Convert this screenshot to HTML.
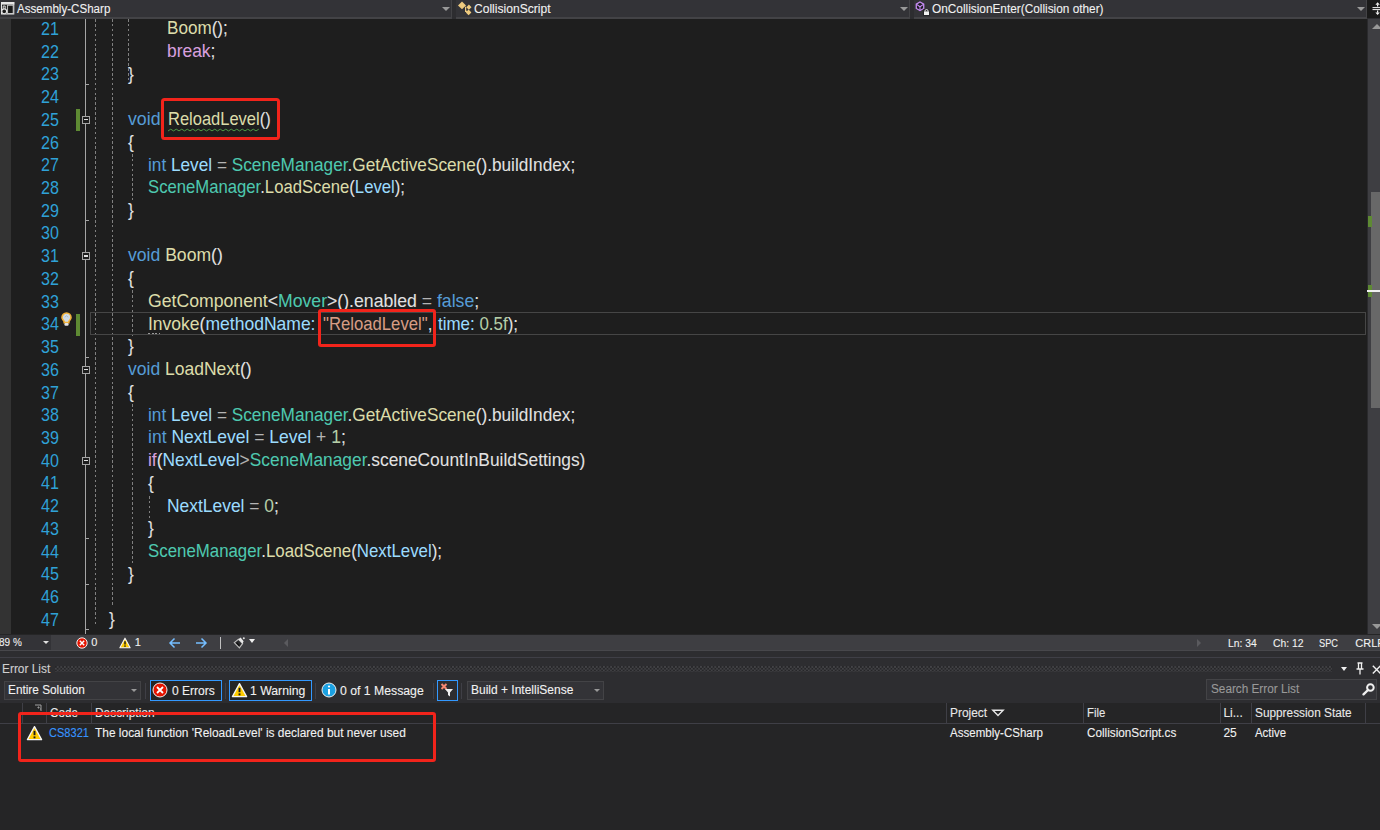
<!DOCTYPE html><html><head><meta charset="utf-8"><style>
*{margin:0;padding:0;box-sizing:border-box}
html,body{width:1380px;height:830px;overflow:hidden;background:#252526;font-family:"Liberation Sans",sans-serif}
.a{position:absolute}
.code{position:absolute;white-space:pre;font-size:18.5px;line-height:22px;transform-origin:0 0;-webkit-text-stroke-width:0.05px}
.ln{position:absolute;width:40px;text-align:right;font-size:18.5px;color:#2FA2D8;white-space:pre;transform-origin:100% 0;transform:scaleX(0.87)}
.ui{position:absolute;white-space:pre;font-size:12.5px;color:#F1F1F1;transform-origin:0 0;-webkit-text-stroke-width:0.1px}
</style></head><body>

<div class="a" style="left:0;top:0;width:1380px;height:634px;background:#1E1E1E"></div>
<div class="a" style="left:0;top:19px;width:11px;height:615px;background:#333333"></div>
<div class="ln" style="left:19px;top:17.89px;line-height:22px">21</div>
<div class="ln" style="left:19px;top:40.62px;line-height:22px">22</div>
<div class="ln" style="left:19px;top:63.35px;line-height:22px">23</div>
<div class="ln" style="left:19px;top:86.08px;line-height:22px">24</div>
<div class="ln" style="left:19px;top:108.81px;line-height:22px">25</div>
<div class="ln" style="left:19px;top:131.54px;line-height:22px">26</div>
<div class="ln" style="left:19px;top:154.27px;line-height:22px">27</div>
<div class="ln" style="left:19px;top:177.00px;line-height:22px">28</div>
<div class="ln" style="left:19px;top:199.73px;line-height:22px">29</div>
<div class="ln" style="left:19px;top:222.46px;line-height:22px">30</div>
<div class="ln" style="left:19px;top:245.19px;line-height:22px">31</div>
<div class="ln" style="left:19px;top:267.92px;line-height:22px">32</div>
<div class="ln" style="left:19px;top:290.65px;line-height:22px">33</div>
<div class="ln" style="left:19px;top:313.38px;line-height:22px">34</div>
<div class="ln" style="left:19px;top:336.11px;line-height:22px">35</div>
<div class="ln" style="left:19px;top:358.84px;line-height:22px">36</div>
<div class="ln" style="left:19px;top:381.57px;line-height:22px">37</div>
<div class="ln" style="left:19px;top:404.30px;line-height:22px">38</div>
<div class="ln" style="left:19px;top:427.03px;line-height:22px">39</div>
<div class="ln" style="left:19px;top:449.76px;line-height:22px">40</div>
<div class="ln" style="left:19px;top:472.49px;line-height:22px">41</div>
<div class="ln" style="left:19px;top:495.22px;line-height:22px">42</div>
<div class="ln" style="left:19px;top:517.95px;line-height:22px">43</div>
<div class="ln" style="left:19px;top:540.68px;line-height:22px">44</div>
<div class="ln" style="left:19px;top:563.41px;line-height:22px">45</div>
<div class="ln" style="left:19px;top:586.14px;line-height:22px">46</div>
<div class="ln" style="left:19px;top:608.87px;line-height:22px">47</div>
<div class="code" id="L21" style="left:167.0px;top:17.19px; transform:scaleX(0.9242);"><span style="color:#DCDCAA">Boom</span><span style="color:#E2E2E2">();</span></div>
<div class="code" id="L22" style="left:167.0px;top:39.92px; transform:scaleX(0.9412);"><span style="color:#D8A0DF">break</span><span style="color:#E2E2E2">;</span></div>
<div class="code" id="L23" style="left:128.0px;top:62.65px; transform:scaleX(0.9350);"><span style="color:#E2E2E2">}</span></div>
<div class="code" id="L25" style="left:128.0px;top:108.11px; transform:scaleX(0.9588);"><span style="color:#569CD6">void</span></div>
<div class="code" id="L125" style="left:167.5px;top:108.11px; transform:scaleX(0.8913);"><span style="color:#DCDCAA">ReloadLevel</span><span style="color:#E2E2E2">()</span></div>
<div class="code" id="L26" style="left:128.0px;top:130.84px; transform:scaleX(0.9350);"><span style="color:#E2E2E2">{</span></div>
<div class="code" id="L27" style="left:148.0px;top:153.57px; transform:scaleX(0.9303);"><span style="color:#569CD6">int</span><span style="color:#E2E2E2"> </span><span style="color:#9CDCFE">Level</span><span style="color:#E2E2E2"> </span><span style="color:#B4B4B4">=</span><span style="color:#E2E2E2"> </span><span style="color:#4EC9B0">SceneManager</span><span style="color:#E2E2E2">.</span><span style="color:#DCDCAA">GetActiveScene</span><span style="color:#E2E2E2">().buildIndex;</span></div>
<div class="code" id="L28" style="left:148.0px;top:176.30px; transform:scaleX(0.9018);"><span style="color:#4EC9B0">SceneManager</span><span style="color:#E2E2E2">.</span><span style="color:#DCDCAA">LoadScene</span><span style="color:#E2E2E2">(</span><span style="color:#9CDCFE">Level</span><span style="color:#E2E2E2">);</span></div>
<div class="code" id="L29" style="left:128.0px;top:199.03px; transform:scaleX(0.9350);"><span style="color:#E2E2E2">}</span></div>
<div class="code" id="L31" style="left:128.0px;top:244.49px; transform:scaleX(0.9500);"><span style="color:#569CD6">void</span><span style="color:#E2E2E2"> </span><span style="color:#DCDCAA">Boom</span><span style="color:#E2E2E2">()</span></div>
<div class="code" id="L32" style="left:128.0px;top:267.22px; transform:scaleX(0.9350);"><span style="color:#E2E2E2">{</span></div>
<div class="code" id="L33" style="left:148.0px;top:289.95px; transform:scaleX(0.9539);"><span style="color:#DCDCAA">GetComponent</span><span style="color:#E2E2E2">&lt;</span><span style="color:#4EC9B0">Mover</span><span style="color:#E2E2E2">&gt;().enabled </span><span style="color:#B4B4B4">=</span><span style="color:#E2E2E2"> </span><span style="color:#569CD6">false</span><span style="color:#E2E2E2">;</span></div>
<div class="code" id="L34" style="left:148.0px;top:312.68px; transform:scaleX(0.9469);"><span style="color:#DCDCAA">Invoke</span><span style="color:#E2E2E2">(</span><span style="color:#9CDCFE">methodName:</span></div>
<div class="code" id="L134" style="left:322.8px;top:312.68px; transform:scaleX(0.9025);"><span style="color:#D69D85">"ReloadLevel"</span><span style="color:#E2E2E2">,</span></div>
<div class="code" id="L234" style="left:438.4px;top:312.68px; transform:scaleX(0.9162);"><span style="color:#9CDCFE">time:</span><span style="color:#E2E2E2"> </span><span style="color:#B5CEA8">0.5f</span><span style="color:#E2E2E2">);</span></div>
<div class="code" id="L35" style="left:128.0px;top:335.41px; transform:scaleX(0.9350);"><span style="color:#E2E2E2">}</span></div>
<div class="code" id="L36" style="left:128.0px;top:358.14px; transform:scaleX(0.9466);"><span style="color:#569CD6">void</span><span style="color:#E2E2E2"> </span><span style="color:#DCDCAA">LoadNext</span><span style="color:#E2E2E2">()</span></div>
<div class="code" id="L37" style="left:128.0px;top:380.87px; transform:scaleX(0.9350);"><span style="color:#E2E2E2">{</span></div>
<div class="code" id="L38" style="left:148.0px;top:403.60px; transform:scaleX(0.9303);"><span style="color:#569CD6">int</span><span style="color:#E2E2E2"> </span><span style="color:#9CDCFE">Level</span><span style="color:#E2E2E2"> </span><span style="color:#B4B4B4">=</span><span style="color:#E2E2E2"> </span><span style="color:#4EC9B0">SceneManager</span><span style="color:#E2E2E2">.</span><span style="color:#DCDCAA">GetActiveScene</span><span style="color:#E2E2E2">().buildIndex;</span></div>
<div class="code" id="L39" style="left:148.0px;top:426.33px; transform:scaleX(0.9474);"><span style="color:#569CD6">int</span><span style="color:#E2E2E2"> </span><span style="color:#9CDCFE">NextLevel</span><span style="color:#E2E2E2"> </span><span style="color:#B4B4B4">=</span><span style="color:#E2E2E2"> </span><span style="color:#9CDCFE">Level</span><span style="color:#E2E2E2"> </span><span style="color:#B4B4B4">+</span><span style="color:#E2E2E2"> </span><span style="color:#B5CEA8">1</span><span style="color:#E2E2E2">;</span></div>
<div class="code" id="L40" style="left:148.0px;top:449.06px; transform:scaleX(0.9378);"><span style="color:#D8A0DF">if</span><span style="color:#E2E2E2">(</span><span style="color:#9CDCFE">NextLevel</span><span style="color:#B4B4B4">&gt;</span><span style="color:#4EC9B0">SceneManager</span><span style="color:#E2E2E2">.sceneCountInBuildSettings)</span></div>
<div class="code" id="L41" style="left:148.0px;top:471.79px; transform:scaleX(0.9350);"><span style="color:#E2E2E2">{</span></div>
<div class="code" id="L42" style="left:167.0px;top:494.52px; transform:scaleX(0.9412);"><span style="color:#9CDCFE">NextLevel</span><span style="color:#E2E2E2"> </span><span style="color:#B4B4B4">=</span><span style="color:#E2E2E2"> </span><span style="color:#B5CEA8">0</span><span style="color:#E2E2E2">;</span></div>
<div class="code" id="L43" style="left:148.0px;top:517.25px; transform:scaleX(0.9350);"><span style="color:#E2E2E2">}</span></div>
<div class="code" id="L44" style="left:148.0px;top:539.98px; transform:scaleX(0.9102);"><span style="color:#4EC9B0">SceneManager</span><span style="color:#E2E2E2">.</span><span style="color:#DCDCAA">LoadScene</span><span style="color:#E2E2E2">(</span><span style="color:#9CDCFE">NextLevel</span><span style="color:#E2E2E2">);</span></div>
<div class="code" id="L45" style="left:128.0px;top:562.71px; transform:scaleX(0.9350);"><span style="color:#E2E2E2">}</span></div>
<div class="code" id="L47" style="left:109.0px;top:608.17px; transform:scaleX(0.9350);"><span style="color:#E2E2E2">}</span></div>
<div class="a" style="left:0;top:0;width:1380px;height:19px;background:#2D2D30"></div>
<div class="a" style="left:0px;top:0;width:452px;height:19px;background:#333337;border-right:1.5px solid #434346;border-bottom:2px solid #434346"></div>
<div class="a" style="left:442.0px;top:7.0px;width:0;height:0;border-left:4.0px solid transparent;border-right:4.0px solid transparent;border-top:4.0px solid #999999"></div>
<div class="a" style="left:456px;top:0;width:454px;height:19px;background:#333337;border-right:1.5px solid #434346;border-bottom:2px solid #434346"></div>
<div class="a" style="left:900.0px;top:7.0px;width:0;height:0;border-left:4.0px solid transparent;border-right:4.0px solid transparent;border-top:4.0px solid #999999"></div>
<div class="a" style="left:914px;top:0;width:453px;height:19px;background:#333337;border-right:1.5px solid #434346;border-bottom:2px solid #434346"></div>
<div class="a" style="left:1357.0px;top:7.0px;width:0;height:0;border-left:4.0px solid transparent;border-right:4.0px solid transparent;border-top:4.0px solid #999999"></div>
<svg class="a" style="left:0px;top:0px" width="16" height="17" viewBox="0 0 16 17"><rect x="1.5" y="2.5" width="12.3" height="11.5" fill="#2A2A2A" stroke="#E6E6E6" stroke-width="1"/><rect x="1" y="2" width="13.3" height="2.6" fill="#E6E6E6"/><rect x="7.6" y="5.2" width="5.6" height="8.3" fill="#1A1A1A" stroke="#D8D8D8" stroke-width="0.9"/><circle cx="4.2" cy="11.3" r="2.4" fill="#1A1A1A" stroke="#E6E6E6" stroke-width="1.1"/><path d="M3.2 8.8 V6 H5.2 V8.8" stroke="#E6E6E6" stroke-width="0.9" fill="none"/></svg>
<div class="ui" id="navA" style="left:17.0px;top:0.67px;font-size:12.50px;line-height:16px;color:#F1F1F1;transform:scaleX(0.9267);">Assembly-CSharp</div>
<svg class="a" style="left:450px;top:0px" width="25" height="17" viewBox="0 0 25 17"><path d="M8 5.4 L12 1.6 L16 5.4 L12 9.2 Z" fill="#EFCB7E"/><path d="M16.3 7.2 L18.9 4.6 L21.5 7.2 L18.9 9.8 Z" fill="#EFCB7E"/><path d="M15.8 12.4 L18.6 9.6 L21.4 12.4 L18.6 15.2 Z" fill="#EFCB7E"/><path d="M15.6 6.8 V11.3 H17.2" stroke="#EFCB7E" stroke-width="1.2" fill="none"/></svg>
<div class="ui" id="navB" style="left:474.0px;top:0.67px;font-size:12.50px;line-height:16px;color:#F1F1F1;transform:scaleX(0.9658);">CollisionScript</div>
<svg class="a" style="left:905px;top:0px" width="27" height="17" viewBox="0 0 27 17"><path d="M15.00 2.00 L18.72 4.15 L18.72 8.45 L15.00 10.60 L11.28 8.45 L11.28 4.15 Z" fill="#1E1E22" stroke="#C48AF2" stroke-width="1.3"/><path d="M11.28 4.15 L15 6.8 L18.72 4.15 M15 6.8 V10.60" stroke="#C48AF2" stroke-width="1.1" fill="none"/><rect x="18.2" y="9.3" width="6.6" height="6.4" fill="#222225"/><rect x="19" y="11.4" width="5" height="3.6" fill="#F2F2F2"/><path d="M20 11.4 V10.8 A1.5 1.2 0 0 1 23 10.8 V11.4" stroke="#F2F2F2" stroke-width="1" fill="none"/></svg>
<div class="ui" id="navC" style="left:932.0px;top:0.67px;font-size:12.50px;line-height:16px;color:#F1F1F1;transform:scaleX(0.9459);">OnCollisionEnter(Collision other)</div>
<div class="a" style="left:1367px;top:0;width:13px;height:18px;background:#1A1A1A"></div>
<svg class="a" style="left:1367px;top:0px" width="13" height="18" viewBox="0 0 13 18"><path d="M10.6 2.2 L8.4 4.8 H12.8 Z M10.6 15 L8.4 12.4 H12.8 Z" fill="#F4F4F4"/><path d="M10.6 4.5 V6.5 M10.6 10.6 V12.8" stroke="#F4F4F4" stroke-width="1.2"/><path d="M5.5 7.6 H13 M5.5 9.6 H13" stroke="#F4F4F4" stroke-width="1"/></svg>
<div class="a" style="left:85px;top:19px;width:1.3px;height:615px;background:#A5A5A5"></div>
<div class="a" style="left:82px;top:116.0px;width:7.5px;height:7.5px;background:#1E1E1E;border:1.2px solid #A5A5A5"></div>
<div class="a" style="left:83.5px;top:118.9px;width:4.5px;height:1.6px;background:#E0E0E0"></div>
<div class="a" style="left:82px;top:252.4px;width:7.5px;height:7.5px;background:#1E1E1E;border:1.2px solid #A5A5A5"></div>
<div class="a" style="left:83.5px;top:255.3px;width:4.5px;height:1.6px;background:#E0E0E0"></div>
<div class="a" style="left:82px;top:366.1px;width:7.5px;height:7.5px;background:#1E1E1E;border:1.2px solid #A5A5A5"></div>
<div class="a" style="left:83.5px;top:368.9px;width:4.5px;height:1.6px;background:#E0E0E0"></div>
<div class="a" style="left:82px;top:457.0px;width:7.5px;height:7.5px;background:#1E1E1E;border:1.2px solid #A5A5A5"></div>
<div class="a" style="left:83.5px;top:459.9px;width:4.5px;height:1.6px;background:#E0E0E0"></div>
<div class="a" style="left:85px;top:83.8px;width:4px;height:1px;background:#A5A5A5"></div>
<div class="a" style="left:85px;top:220.2px;width:4px;height:1px;background:#A5A5A5"></div>
<div class="a" style="left:85px;top:356.6px;width:4px;height:1px;background:#A5A5A5"></div>
<div class="a" style="left:85px;top:538.4px;width:4px;height:1px;background:#A5A5A5"></div>
<div class="a" style="left:85px;top:583.9px;width:4px;height:1px;background:#A5A5A5"></div>
<div class="a" style="left:85px;top:629.3px;width:4px;height:1px;background:#A5A5A5"></div>
<div class="a" style="left:95.0px;top:19.0px;width:1px;height:608.0px;background:repeating-linear-gradient(to bottom,#808080 0,#808080 2.6px,transparent 2.6px,transparent 4.9px)"></div>
<div class="a" style="left:112.0px;top:19.0px;width:1px;height:588.0px;background:repeating-linear-gradient(to bottom,#808080 0,#808080 2.6px,transparent 2.6px,transparent 4.9px)"></div>
<div class="a" style="left:127.5px;top:19.0px;width:1px;height:63.0px;background:repeating-linear-gradient(to bottom,#808080 0,#808080 2.6px,transparent 2.6px,transparent 4.9px)"></div>
<div class="a" style="left:132.0px;top:154.0px;width:1px;height:45.5px;background:repeating-linear-gradient(to bottom,#808080 0,#808080 2.6px,transparent 2.6px,transparent 4.9px)"></div>
<div class="a" style="left:132.0px;top:290.4px;width:1px;height:45.5px;background:repeating-linear-gradient(to bottom,#808080 0,#808080 2.6px,transparent 2.6px,transparent 4.9px)"></div>
<div class="a" style="left:132.0px;top:404.0px;width:1px;height:159.1px;background:repeating-linear-gradient(to bottom,#808080 0,#808080 2.6px,transparent 2.6px,transparent 4.9px)"></div>
<div class="a" style="left:149.0px;top:495.9px;width:1px;height:21.7px;background:repeating-linear-gradient(to bottom,#808080 0,#808080 2.6px,transparent 2.6px,transparent 4.9px)"></div>
<div class="a" style="left:75.5px;top:109.0px;width:4px;height:22.2px;background:#5E8A33"></div>
<div class="a" style="left:75.5px;top:313.6px;width:4px;height:22.2px;background:#5E8A33"></div>
<div class="a" style="left:89.5px;top:312px;width:1276px;height:23px;border:1.7px solid #464646"></div>
<svg class="a" style="left:61px;top:312px" width="11" height="15" viewBox="0 0 11 15"><path d="M5.5 1 A4.5 4.5 0 0 1 10 5.5 C10 7.3 8.6 8.2 7.8 9.6 V10.6 H3.2 V9.6 C2.4 8.2 1 7.3 1 5.5 A4.5 4.5 0 0 1 5.5 1 Z" fill="#CFDCE6" stroke="#F2B23A" stroke-width="1.6"/><path d="M3.8 5.2 L5.5 3.8 L7.2 5.2" stroke="#9FB4C4" stroke-width="0.8" fill="none"/><rect x="3.4" y="11" width="4.2" height="2.8" rx="1.2" fill="#E6E6E6"/></svg>
<div class="a" style="left:148px;top:333px;width:12px;height:1.3px;background:repeating-linear-gradient(to right,#9A9A9A 0,#9A9A9A 2px,transparent 2px,transparent 3.5px)"></div>
<svg class="a" style="left:167.5px;top:127.6px" width="93" height="4" viewBox="0 0 93 4"><path d="M0 3  L2.75 1.2 L5.50 2.9 L8.25 1.2 L11.00 2.9 L13.75 1.2 L16.50 2.9 L19.25 1.2 L22.00 2.9 L24.75 1.2 L27.50 2.9 L30.25 1.2 L33.00 2.9 L35.75 1.2 L38.50 2.9 L41.25 1.2 L44.00 2.9 L46.75 1.2 L49.50 2.9 L52.25 1.2 L55.00 2.9 L57.75 1.2 L60.50 2.9 L63.25 1.2 L66.00 2.9 L68.75 1.2 L71.50 2.9 L74.25 1.2 L77.00 2.9 L79.75 1.2 L82.50 2.9 L85.25 1.2 L88.00 2.9 L90.75 1.2" stroke="#4F9A47" stroke-width="1" fill="none" stroke-linejoin="round"/></svg>
<div class="a" style="left:161px;top:98px;width:119px;height:42px;border:3.2px solid #F2241B;border-radius:3.5px"></div>
<div class="a" style="left:318px;top:309px;width:118px;height:38px;border:3px solid #F2241B;border-radius:3px"></div>
<div class="a" style="left:1366.5px;top:19px;width:13.5px;height:615px;background:#3E3E42;border-left:1px solid #2A2A2D"></div>
<div class="a" style="left:1371px;top:192px;width:9px;height:216px;background:#686868"></div>
<div class="a" style="left:1372px;top:24px;width:0;height:0;border-left:5px solid transparent;border-right:5px solid transparent;border-bottom:5px solid #999"></div>
<div class="a" style="left:1372px;top:624px;width:0;height:0;border-left:5px solid transparent;border-right:5px solid transparent;border-top:5px solid #999"></div>
<div class="a" style="left:1368px;top:216px;width:4px;height:11px;background:#5E8A33"></div>
<div class="a" style="left:1368px;top:285px;width:4px;height:12px;background:#5E8A33"></div>
<div class="a" style="left:1367px;top:290px;width:13px;height:1.5px;background:#F0F0F0"></div>
<div class="a" style="left:0;top:634.5px;width:1380px;height:16px;background:#3E3E42"></div>
<div class="a" style="left:0;top:634.5px;width:51px;height:16px;background:#333337"></div>
<div class="ui" id="zoom" style="left:0.0px;top:635.49px;font-size:11.00px;line-height:14px;color:#F1F1F1;transform:scaleX(0.9080);margin-left:-1px;">89 %</div>
<div class="a" style="left:43.0px;top:640.8px;width:0;height:0;border-left:3.5px solid transparent;border-right:3.5px solid transparent;border-top:3.5px solid #E0E0E0"></div>
<svg class="a" style="left:75.5px;top:637px" width="12" height="12" viewBox="0 0 12 12"><circle cx="6" cy="6" r="5.2" fill="#E51400" stroke="#F0F0F0" stroke-width="1"/><path d="M3.8 3.8 L8.2 8.2 M8.2 3.8 L3.8 8.2" stroke="#fff" stroke-width="1.4"/></svg>
<div class="ui" id="st0" style="left:91.3px;top:635.49px;font-size:11.00px;line-height:14px;color:#F1F1F1;">0</div>
<svg class="a" style="left:119px;top:637px" width="12" height="12" viewBox="0 0 12 12"><path d="M6 1.2 L11.1 10.7 H0.9 Z" fill="#FFCC00" stroke="#F4F4F4" stroke-width="1.1" stroke-linejoin="round"/><path d="M6 4.2 V7.4" stroke="#1A1A1A" stroke-width="1.5"/><rect x="5.25" y="8.4" width="1.5" height="1.4" fill="#1A1A1A"/></svg>
<div class="ui" id="st1" style="left:134.8px;top:635.49px;font-size:11.00px;line-height:14px;color:#F1F1F1;">1</div>
<svg class="a" style="left:168px;top:637px" width="13" height="12" viewBox="0 0 13 12"><path d="M12 6 H2 M6.5 1.5 L2 6 L6.5 10.5" stroke="#75BEFF" stroke-width="1.5" fill="none"/></svg>
<svg class="a" style="left:195px;top:637px" width="13" height="12" viewBox="0 0 13 12"><path d="M1 6 H11 M6.5 1.5 L11 6 L6.5 10.5" stroke="#75BEFF" stroke-width="1.5" fill="none"/></svg>
<div class="a" style="left:220px;top:637px;width:1.3px;height:12px;background:#C0C0C0"></div>
<svg class="a" style="left:225px;top:634px" width="22" height="18" viewBox="0 0 22 18"><path d="M9.3 8.6 L13.4 5.2 L17.6 9.6 L14.4 13.9 Z" fill="#2A2A2D" stroke="#BDBDBD" stroke-width="1.2"/><path d="M13.4 5.2 L15.6 3.6 L18.6 7.2 L17.6 9.6 Z" fill="#E8E8E8"/><path d="M11.6 8.8 L14.3 11.6" stroke="#111" stroke-width="1.3"/><circle cx="18.8" cy="4.3" r="1" fill="#E0E0E0"/></svg>
<div class="a" style="left:248.5px;top:639.4px;width:0;height:0;border-left:3.5px solid transparent;border-right:3.5px solid transparent;border-top:4.4px solid #F0F0F0"></div>
<div class="a" style="left:284px;top:639px;width:0;height:0;border-top:4.5px solid transparent;border-bottom:4.5px solid transparent;border-right:4.5px solid #5A5A5E"></div>
<div class="a" style="left:1197px;top:639px;width:0;height:0;border-top:4.5px solid transparent;border-bottom:4.5px solid transparent;border-left:4.5px solid #5A5A5E"></div>
<div class="ui" id="ln" style="left:1228.0px;top:636.19px;font-size:11.00px;line-height:14px;color:#F1F1F1;transform:scaleX(0.9355);">Ln: 34</div>
<div class="ui" id="ch" style="left:1272.5px;top:636.19px;font-size:11.00px;line-height:14px;color:#F1F1F1;transform:scaleX(0.9438);">Ch: 12</div>
<div class="ui" id="spc" style="left:1318.7px;top:636.19px;font-size:11.00px;line-height:14px;color:#F1F1F1;transform:scaleX(0.8400);">SPC</div>
<div class="ui" id="crlf" style="left:1355.3px;top:636.19px;font-size:11.00px;line-height:14px;color:#F1F1F1;">CRLF</div>
<div class="a" style="left:0;top:650.5px;width:1380px;height:7px;background:#2D2D30"></div>
<div class="a" style="left:0;top:650.3px;width:1380px;height:1.2px;background:#47474B"></div>
<div class="a" style="left:0;top:657px;width:1380px;height:1px;background:#3F3F46"></div>
<div class="a" style="left:0;top:658px;width:1380px;height:45px;background:#2D2D30"></div>
<div class="ui" id="elt" style="left:1.5px;top:661.84px;font-size:12.00px;line-height:15px;color:#D0D0D0;transform:scaleX(0.9898);">Error List</div>
<div class="a" style="left:55px;top:666px;width:1277px;height:6px;background-color:#252527;background-image:linear-gradient(45deg,#4A4A4E 25%,transparent 25%,transparent 75%,#4A4A4E 75%),linear-gradient(45deg,#4A4A4E 25%,transparent 25%,transparent 75%,#4A4A4E 75%);background-size:3.6px 3.6px;background-position:0 0,1.8px 1.8px;opacity:0.85"></div>
<div class="a" style="left:1340.7px;top:666.5px;width:0;height:0;border-left:3.8px solid transparent;border-right:3.8px solid transparent;border-top:4.6px solid #F0F0F0"></div>
<svg class="a" style="left:1355px;top:662px" width="10" height="13" viewBox="0 0 10 13"><path d="M2.5 1 H7.5 M3.5 1 V7 M6.5 1 V7 M1.5 7 H8.5 M5 7 V12.5" stroke="#F0F0F0" stroke-width="1.3" fill="none"/></svg>
<svg class="a" style="left:1371.5px;top:664.5px" width="9" height="9" viewBox="0 0 9 9"><path d="M0.8 0.8 L8.5 8.5 M8.5 0.8 L0.8 8.5" stroke="#F0F0F0" stroke-width="1.4"/></svg>
<div class="a" style="left:4px;top:681px;width:137px;height:19px;background:#333337;border:1px solid #434346"></div>
<div class="ui" id="es" style="left:7.5px;top:682.54px;font-size:12.00px;line-height:15px;color:#F1F1F1;transform:scaleX(0.9846);">Entire Solution</div>
<div class="a" style="left:130.5px;top:689.2px;width:0;height:0;border-left:3.5px solid transparent;border-right:3.5px solid transparent;border-top:3.5px solid #999"></div>
<div class="a" style="left:145px;top:683px;width:1px;height:16px;background:#3F3F46"></div>
<div class="a" style="left:150px;top:680px;width:72px;height:21px;border:1.5px solid #3399FF;background:#252526"></div>
<svg class="a" style="left:152px;top:682px" width="16" height="16" viewBox="0 0 16 16"><circle cx="8" cy="8" r="7" fill="#E51400" stroke="#F0F0F0" stroke-width="1"/><path d="M5 5 L11 11 M11 5 L5 11" stroke="#fff" stroke-width="1.8"/></svg>
<div class="ui" id="err" style="left:171.7px;top:683.64px;font-size:12.00px;line-height:15px;color:#F1F1F1;transform:scaleX(1.0023);">0 Errors</div>
<div class="a" style="left:225px;top:683px;width:1px;height:16px;background:#3F3F46"></div>
<div class="a" style="left:229px;top:680px;width:83px;height:21px;border:1.5px solid #3399FF;background:#252526"></div>
<svg class="a" style="left:231px;top:682px" width="17" height="16" viewBox="0 0 17 16"><path d="M8.5 1.6 L15.6 14.6 H1.4 Z" fill="#FFCC00" stroke="#F4F4F4" stroke-width="1.3" stroke-linejoin="round"/><path d="M8.5 5.8 V10.2" stroke="#1A1A1A" stroke-width="1.9"/><rect x="7.55" y="11.4" width="1.9" height="1.9" fill="#1A1A1A"/></svg>
<div class="ui" id="warn" style="left:250.0px;top:683.64px;font-size:12.00px;line-height:15px;color:#F1F1F1;transform:scaleX(1.0185);">1 Warning</div>
<div class="a" style="left:315px;top:683px;width:1px;height:16px;background:#3F3F46"></div>
<svg class="a" style="left:321px;top:682px" width="16" height="16" viewBox="0 0 16 16"><circle cx="8" cy="8" r="7" fill="#1BA1E2" stroke="#F0F0F0" stroke-width="1"/><path d="M8 7 V12.5" stroke="#fff" stroke-width="2"/><circle cx="8" cy="4.5" r="1.1" fill="#fff"/></svg>
<div class="ui" id="msg" style="left:340.0px;top:683.64px;font-size:12.00px;line-height:15px;color:#F1F1F1;transform:scaleX(1.0207);">0 of 1 Message</div>
<div class="a" style="left:433px;top:683px;width:1px;height:16px;background:#3F3F46"></div>
<div class="a" style="left:437px;top:680px;width:21px;height:21px;border:1.5px solid #3399FF"></div>
<svg class="a" style="left:440px;top:683px" width="15" height="15" viewBox="0 0 15 15"><path d="M1.5 1 L6.5 6 M6.5 1 L1.5 6" stroke="#F48771" stroke-width="2"/><path d="M5 6 H13 L10 9.5 V13.5 L8 12 V9.5 Z" fill="#F0F0F0"/></svg>
<div class="a" style="left:461px;top:683px;width:1px;height:16px;background:#3F3F46"></div>
<div class="a" style="left:467px;top:681px;width:137px;height:19px;background:#333337;border:1px solid #434346"></div>
<div class="ui" id="bi" style="left:471.3px;top:682.54px;font-size:12.00px;line-height:15px;color:#F1F1F1;transform:scaleX(0.9990);">Build + IntelliSense</div>
<div class="a" style="left:593.5px;top:689.2px;width:0;height:0;border-left:3.5px solid transparent;border-right:3.5px solid transparent;border-top:3.5px solid #999"></div>
<div class="a" style="left:1206px;top:679px;width:171px;height:21px;background:#333337;border:1px solid #434346"></div>
<div class="ui" id="srch" style="left:1210.8px;top:681.84px;font-size:12.00px;line-height:15px;color:#999999;transform:scaleX(0.9800);">Search Error List</div>
<svg class="a" style="left:1361px;top:682px" width="14" height="14" viewBox="0 0 14 14"><circle cx="9.4" cy="5.5" r="3.3" fill="none" stroke="#F0F0F0" stroke-width="2"/><path d="M7 8 L2.5 12.3" stroke="#F0F0F0" stroke-width="2.4" stroke-linecap="round"/></svg>
<div class="a" style="left:0;top:703px;width:1380px;height:127px;background:#252526"></div>
<div class="a" style="left:0;top:722.5px;width:1380px;height:1.5px;background:#3F3F46"></div>
<div class="a" style="left:21.5px;top:703px;width:1px;height:19.5px;background:#3F3F46"></div>
<div class="a" style="left:46.0px;top:703px;width:1px;height:19.5px;background:#3F3F46"></div>
<div class="a" style="left:91.3px;top:703px;width:1px;height:19.5px;background:#3F3F46"></div>
<div class="a" style="left:946.3px;top:703px;width:1px;height:19.5px;background:#3F3F46"></div>
<div class="a" style="left:1083.2px;top:703px;width:1px;height:19.5px;background:#3F3F46"></div>
<div class="a" style="left:1220.2px;top:703px;width:1px;height:19.5px;background:#3F3F46"></div>
<div class="a" style="left:1251.2px;top:703px;width:1px;height:19.5px;background:#3F3F46"></div>
<div class="a" style="left:1365.3px;top:703px;width:1px;height:19.5px;background:#3F3F46"></div>
<svg class="a" style="left:34px;top:704px" width="8" height="8" viewBox="0 0 8 8"><path d="M1 1 H7 V7" stroke="#A0A0A0" stroke-width="1" fill="none"/><path d="M4 3 H5 V4 H4 Z M6 5 H7" stroke="#A0A0A0" stroke-width="1"/></svg>
<div class="ui" id="hc" style="left:49.6px;top:706.34px;font-size:12.00px;line-height:15px;color:#E8E8E8;transform:scaleX(0.9724);">Code</div>
<div class="ui" id="hd" style="left:95.4px;top:706.34px;font-size:12.00px;line-height:15px;color:#E8E8E8;transform:scaleX(0.9917);">Description</div>
<div class="ui" id="hp" style="left:950.2px;top:706.34px;font-size:12.00px;line-height:15px;color:#E8E8E8;transform:scaleX(0.9946);">Project</div>
<div class="ui" id="hf" style="left:1086.5px;top:706.34px;font-size:12.00px;line-height:15px;color:#E8E8E8;transform:scaleX(0.9474);">File</div>
<div class="ui" id="hl" style="left:1223.4px;top:706.34px;font-size:12.00px;line-height:15px;color:#E8E8E8;">Li...</div>
<div class="ui" id="hs" style="left:1255.0px;top:706.34px;font-size:12.00px;line-height:15px;color:#E8E8E8;transform:scaleX(0.9857);">Suppression State</div>
<svg class="a" style="left:991px;top:708.5px" width="14" height="8" viewBox="0 0 14 8"><path d="M1.8 1.2 H12.2 L7 6.6 Z" fill="none" stroke="#E8E8E8" stroke-width="1.4"/></svg>
<svg class="a" style="left:26px;top:725px" width="17" height="16" viewBox="0 0 17 16"><path d="M8.5 1.6 L15.6 14.6 H1.4 Z" fill="#FFCC00" stroke="#F4F4F4" stroke-width="1.3" stroke-linejoin="round"/><path d="M8.5 5.8 V10.2" stroke="#1A1A1A" stroke-width="1.9"/><rect x="7.55" y="11.4" width="1.9" height="1.9" fill="#1A1A1A"/></svg>
<div class="ui" id="rc" style="left:48.9px;top:726.34px;font-size:12.00px;line-height:15px;color:#3794FF;transform:scaleX(0.9209);">CS8321</div>
<div class="ui" id="rd" style="left:95.4px;top:726.34px;font-size:12.00px;line-height:15px;color:#F1F1F1;transform:scaleX(0.9936);">The local function 'ReloadLevel' is declared but never used</div>
<div class="ui" id="rp" style="left:950.2px;top:726.34px;font-size:12.00px;line-height:15px;color:#F1F1F1;transform:scaleX(0.9619);">Assembly-CSharp</div>
<div class="ui" id="rf" style="left:1086.5px;top:726.34px;font-size:12.00px;line-height:15px;color:#F1F1F1;transform:scaleX(0.9780);">CollisionScript.cs</div>
<div class="ui" id="rl" style="left:1223.4px;top:726.34px;font-size:12.00px;line-height:15px;color:#F1F1F1;">25</div>
<div class="ui" id="ra" style="left:1255.0px;top:726.34px;font-size:12.00px;line-height:15px;color:#F1F1F1;transform:scaleX(0.9515);">Active</div>
<div class="a" style="left:18px;top:712px;width:418px;height:49.5px;border:3px solid #F2241B;border-radius:3px"></div>
</body></html>
